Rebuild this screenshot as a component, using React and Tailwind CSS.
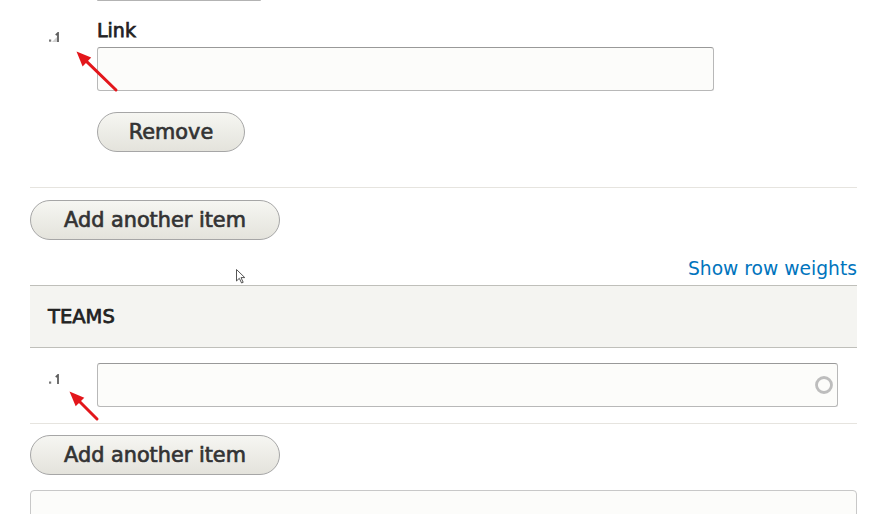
import React from 'react';

const btn =
    'h-[40px] rounded-full border border-[#a6a6a6] bg-gradient-to-b from-[#f6f6f2] to-[#e4e3dc] text-[#333] text-[20.8px] leading-none [-webkit-text-stroke:0.7px_#333] [text-shadow:0_1px_0_rgba(255,255,255,0.6)] flex items-center justify-center';

const Handle = ({ filled }) => (
    <svg width="13" height="11" viewBox="0 0 13 11">
        {filled && <polygon points="4,10 10.5,3.5 10.5,10" fill="#cfcfcf" />}
        <rect x="1" y="7.5" width="2.2" height="2.2" fill="#777" />
        <path d="M7.8 3.2 L10 1 L10 10" stroke="#5f5f5f" strokeWidth="1.8" fill="none" />
    </svg>
);

const Arrow = ({ tail, base, tip, c1, c2 }) => (
    <g>
        <line x1={tail[0]} y1={tail[1]} x2={base[0]} y2={base[1]} stroke="#e3161b" strokeWidth="3" strokeLinecap="round" />
        <polygon points={`${tip[0]},${tip[1]} ${c1[0]},${c1[1]} ${c2[0]},${c2[1]}`} fill="#e3161b" />
    </g>
);

const App = () => {
    return (
        <div className="relative w-[886px] h-[514px] overflow-hidden bg-white pl-[30px] pr-[29px] font-['DejaVu_Sans',sans-serif] text-[#222]">
            {/* bottom edge of previous field */}
            <div className="ml-[67px] w-[164px] h-px rounded-b bg-[#b3b3b3]" />

            {/* Link row */}
            <div className="flex border-b border-[#e6e4df] pb-[35px]">
                <div className="w-[67px] pl-[18px] pt-[31px]">
                    <Handle filled />
                </div>
                <div className="flex-1">
                    <div className="mt-[17px] text-[19px] leading-[24px] [-webkit-text-stroke:0.75px_#222]">Link</div>
                    <div className="mt-[5px] h-[44px] w-[617px] rounded-[3px] border border-[#b8b8b8] border-t-[#999] bg-[#fcfcfa]" />
                    <button className={`${btn} mt-[21px] w-[148px]`}>Remove</button>
                </div>
            </div>

            <button className={`${btn} mt-[12px] w-[250px]`}>Add another item</button>

            <div className="mt-[17px] mb-[4px] text-right text-[18.7px] leading-[24px] text-[#0074bd]">
                Show row weights
            </div>

            {/* Teams table */}
            <div className="h-[63px] flex items-center pl-[18px] bg-[#f4f4f1] border-y border-[#bfbfba]">
                <span className="text-[19.5px] uppercase [-webkit-text-stroke:0.75px_#222]">Teams</span>
            </div>
            <div className="flex border-b border-[#e6e4df] pt-[15px] pb-[16px]">
                <div className="w-[67px] pl-[18px] pt-[11px]">
                    <Handle />
                </div>
                <div className="flex-1 pr-[19px]">
                    <div className="relative h-[44px] rounded-[3px] border border-[#b8b8b8] border-t-[#999] bg-[#fcfcfa]">
                        <svg className="absolute right-[3px] top-[11px]" width="20" height="20" viewBox="0 0 20 20">
                            <circle cx="10" cy="10" r="7.5" stroke="#bdbdbd" strokeWidth="2.8" fill="none" />
                        </svg>
                    </div>
                </div>
            </div>

            <button className={`${btn} mt-[11px] w-[250px]`}>Add another item</button>

            <div className="mt-[15px] h-[60px] rounded-[4px] border border-[#c8c8c8] bg-[#fcfcfa]" />

            {/* annotations */}
            <svg className="absolute inset-0 pointer-events-none" width="886" height="514">
                <Arrow tail={[116, 90]} base={[87, 61.8]} tip={[76.5, 51.5]} c1={[91.2, 57.5]} c2={[82.6, 66.4]} />
                <Arrow tail={[97, 419]} base={[80, 402]} tip={[69.5, 391.5]} c1={[84.3, 397.7]} c2={[75.7, 406.3]} />
                <path d="M236.5 269.5 L236.5 281 L239.3 278.3 L241.6 283 L243.2 282.3 L241 277.6 L244.8 277.6 Z" fill="#fff" stroke="#555" strokeWidth="1" />
            </svg>
        </div>
    );
};

export default App;
